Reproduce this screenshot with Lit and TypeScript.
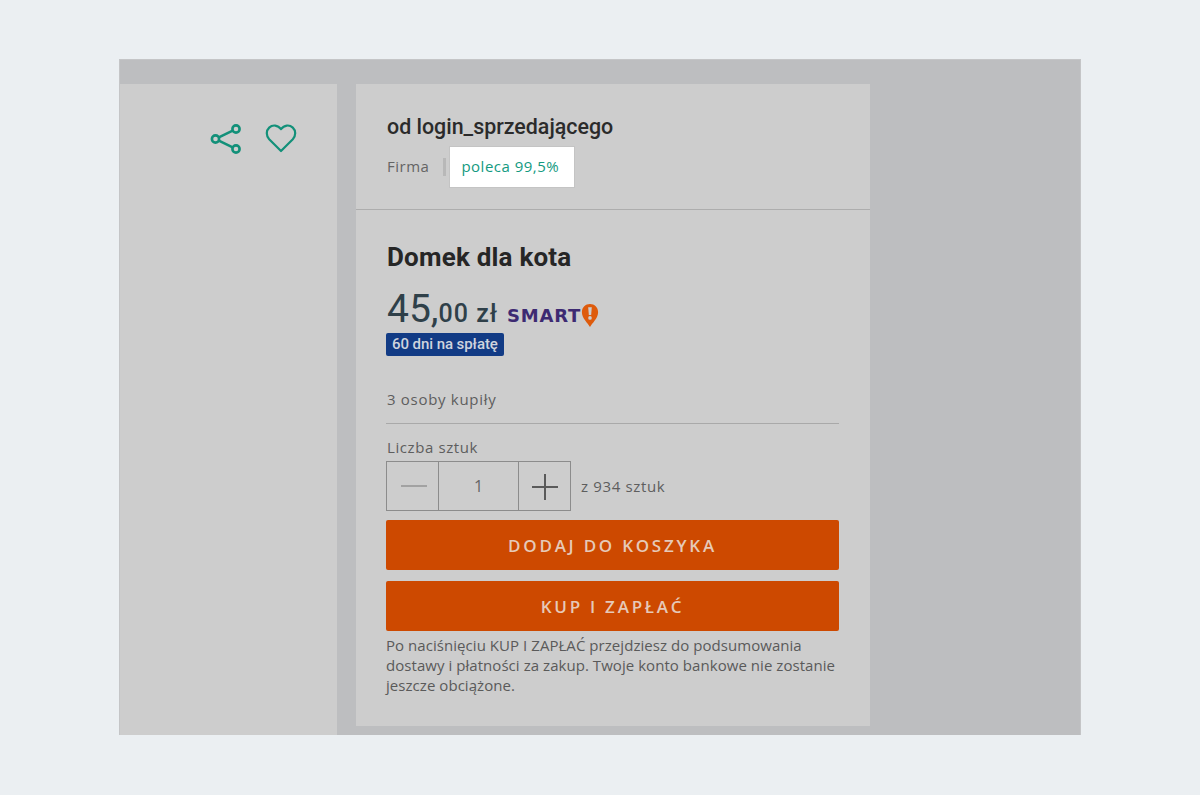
import { LitElement, html, css } from 'lit';
import { customElement } from 'lit/decorators.js';

@customElement('app-root')
export class AppRoot extends LitElement {
  static styles = css`
    :host {
      display: block;
      height: 795px;
      background: #ebeff2;
      font-family: 'Open Sans', sans-serif;
      overflow: hidden;
    }
    .frame {
      box-sizing: border-box;
      width: 962px;
      height: 676px;
      margin-left: 119px;
      position: relative;
      top: 59px;
      background: #bdbec0;
      border: 1px solid #c4c5c7;
      border-bottom: 0;
      padding-top: 24px;
      display: grid;
      grid-template-columns: 217px 514px;
      column-gap: 19px;
      align-items: start;
    }
    .side {
      height: 651px;
      background: #cdcdcd;
      display: flex;
      justify-content: flex-end;
      gap: 23px;
      padding: 39px 40px 0 0;
      box-sizing: border-box;
    }
    .side svg { display: block; }
    .main {
      height: 642px;
      background: #cdcdcd;
    }
    .seller {
      height: 126px;
      box-sizing: border-box;
      border-bottom: 1px solid #adadad;
      padding: 30px 31px 0;
    }
    .login {
      font: 500 21.4px/26px Roboto, sans-serif;
      color: #2b2b2b;
    }
    .meta {
      display: flex;
      align-items: center;
      margin-top: 6px;
      font-size: 15px;
      color: #646464;
      letter-spacing: 0.5px;
    }
    .firma { margin-bottom: 3px; }
    .sep {
      width: 3px;
      height: 18px;
      background: #b8b8b8;
      margin: 0 3px 0 14px;
    }
    .rating {
      box-sizing: border-box;
      width: 126px;
      height: 42px;
      background: #fff;
      border: 1px solid #c4c4c4;
      display: flex;
      align-items: center;
      padding: 0 0 2px 11px;
      color: #139a81;
    }
    .offer {
      padding: 32px 31px 0 30px;
    }
    h1 {
      margin: 0 0 0 1px;
      font: 700 26px/30px Roboto, sans-serif;
      letter-spacing: 0.2px;
      color: #262626;
    }
    .price-row {
      display: flex;
      align-items: baseline;
      margin: 14px 0 0 1px;
      height: 47px;
      color: #2f4049;
      font-family: Roboto, sans-serif;
      font-weight: 500;
    }
    .price-main { font-size: 39px; font-weight: 400; line-height: 47px; }
    .price-rest { font-size: 25px; line-height: 47px; letter-spacing: 1px; }
    .smart {
      display: flex;
      align-items: center;
      align-self: center;
      margin-left: 9px;
      margin-top: 12px;
      font: 700 18px/24px 'DejaVu Sans', sans-serif;
      letter-spacing: 0.8px;
      color: #3d2a72;
    }
    .smart svg { display: block; margin-left: 0; }
    .badge {
      display: inline-block;
      padding: 0 6px;
      height: 23px;
      font: 500 15px/22px Roboto, sans-serif;
      letter-spacing: -0.07px;
      color: #cfd4de;
      background: #123b85;
      border-radius: 2px;
      vertical-align: top;
    }
    .buyers {
      margin-top: 35px;
      height: 32px;
      padding-left: 1px;
      border-bottom: 1px solid #a9a9a9;
      font-size: 15px;
      line-height: 17px;
      color: #5e5e5e;
      letter-spacing: 0.7px;
    }
    .qty-label {
      margin-top: 14px;
      padding-left: 1px;
      font-size: 15px;
      line-height: 19px;
      color: #5e5e5e;
      letter-spacing: 0.6px;
    }
    .qty-row {
      display: flex;
      align-items: center;
      margin-top: 4px;
    }
    .stepper {
      box-sizing: border-box;
      display: grid;
      grid-template-columns: 51px 1px 79px 1px 52px;
      width: 185px;
      height: 50px;
      border: 1px solid #8c8c8c;
    }
    .stepper i { background: #8c8c8c; }
    .cell {
      display: flex;
      align-items: center;
      justify-content: center;
      font-size: 16px;
      color: #666;
    }
    .minus { margin-left: 2px; }
    .plus { margin: 1px 1px 0 0; }
    .stock {
      margin-left: 10px;
      font-size: 15px;
      color: #5e5e5e;
      letter-spacing: 0.65px;
    }
    .btn {
      display: flex;
      align-items: center;
      justify-content: center;
      height: 50px;
      margin-top: 9px;
      background: #cd4900;
      border-radius: 2px;
      color: #e6c9b8;
      font-size: 17px;
      font-weight: 600;
      letter-spacing: 2.75px;
    }
    .btn + .btn { margin-top: 11px; }
    .note {
      margin: 4px 0 0;
      font-size: 15px;
      line-height: 20px;
      letter-spacing: 0.05px;
      color: #5a5a5a;
    }
  `;

  render() {
    return html`
      <div class="frame">
        <div class="side">
          <svg width="32" height="32" viewBox="0 0 32 32" fill="none" stroke="#129079" stroke-width="2.6">
            <circle cx="5.500" cy="16" r="3.600" />
            <circle cx="26" cy="6" r="3.600" />
            <circle cx="26" cy="26" r="3.600" />
            <path d="M8.800 14.300 22.700 7.700M8.800 17.700l13.900 6.600" />
          </svg>
          <svg width="32" height="30" viewBox="0 0 32 30" fill="none" stroke="#129079" stroke-width="2.2" stroke-linejoin="round">
            <path d="M16 28 4.200 16.200C1 12.800 1 7.600 4.200 4.600 7.600 1.400 12.800 1.800 16 6.200 19.200 1.800 24.400 1.400 27.800 4.600 31 7.600 31 12.800 27.800 16.200Z" />
          </svg>
        </div>
        <div class="main">
          <div class="seller">
            <div class="login">od login_sprzedającego</div>
            <div class="meta">
              <span class="firma">Firma</span><span class="sep"></span>
              <span class="rating">poleca 99,5%</span>
            </div>
          </div>
          <div class="offer">
            <h1>Domek dla kota</h1>
            <div class="price-row">
              <span class="price-main">45,</span><span class="price-rest">00 zł</span>
              <span class="smart">SMART<svg width="18" height="25" viewBox="0 0 20 26" preserveAspectRatio="none">
                  <path fill="#de5b0c" d="M10 25C8 21 1 16 1 9.500 1 4.500 5 1 10 1s9 3.500 9 8.500C19 16 12 21 10 25Z" />
                  <path fill="#cdcdcd" d="M8 4.500h4l-.7 8H8.700Z" />
                  <circle fill="#cdcdcd" cx="10" cy="15.500" r="2" />
                </svg></span>
            </div>
            <span class="badge">60 dni na spłatę</span>
            <div class="buyers">3 osoby kupiły</div>
            <div class="qty-label">Liczba sztuk</div>
            <div class="qty-row">
              <div class="stepper">
                <div class="cell">
                  <svg class="minus" width="26" height="2"><rect width="26" height="2" fill="#a2a2a2" /></svg>
                </div>
                <i></i>
                <div class="cell">1</div>
                <i></i>
                <div class="cell">
                  <svg class="plus" width="26" height="26" viewBox="0 0 26 26">
                    <path d="M0 13h26M13 0v26" stroke="#5a5a5a" stroke-width="2" />
                  </svg>
                </div>
              </div>
              <span class="stock">z 934 sztuk</span>
            </div>
            <div class="btn">DODAJ DO KOSZYKA</div>
            <div class="btn">KUP I ZAPŁAĆ</div>
            <p class="note">
              Po naciśnięciu KUP I ZAPŁAĆ przejdziesz do podsumowania dostawy i płatności za zakup. Twoje konto bankowe nie zostanie jeszcze obciążone.
            </p>
          </div>
        </div>
      </div>
    `;
  }
}
